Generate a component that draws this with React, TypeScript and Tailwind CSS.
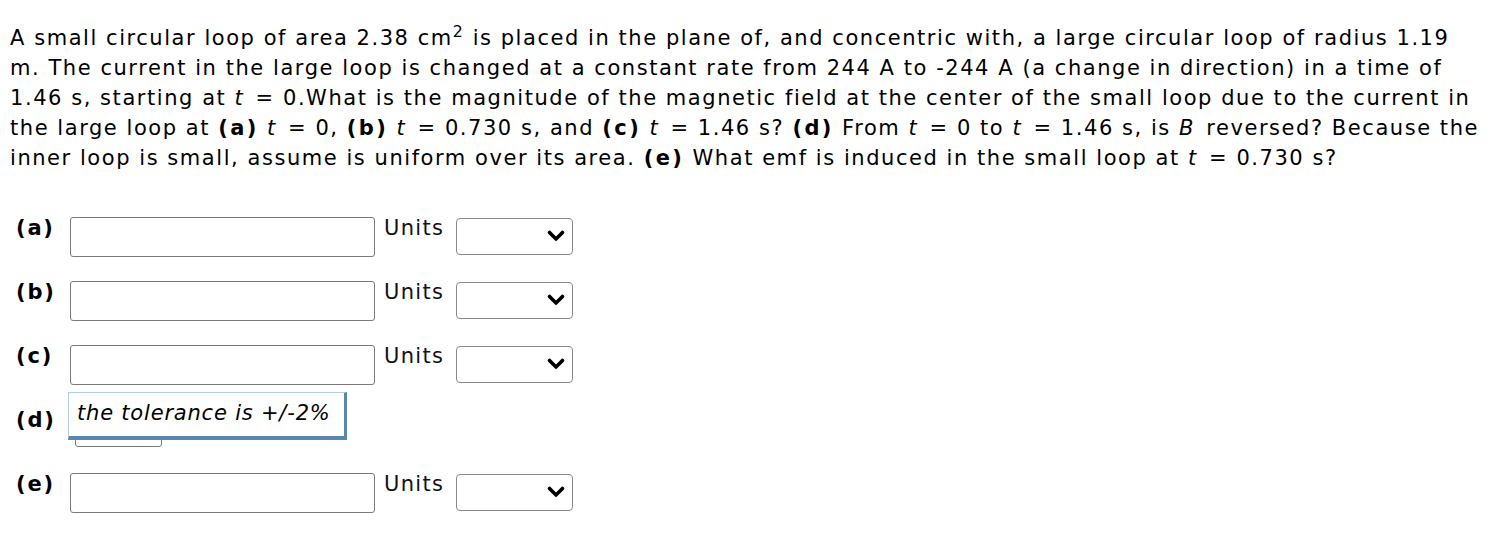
import React from 'react'

function Chevron() {
  return (
    <svg width="20" height="14" viewBox="0 0 20 14" className="absolute right-[6px] top-[10px]">
      <path d="M3.5 3.5 L10 10 L16.5 3.5" fill="none" stroke="#000" strokeWidth="3.6" strokeLinecap="round" strokeLinejoin="round" />
    </svg>
  )
}

function AnswerRow({ label }: { label: string }) {
  return (
    <div className="flex items-start h-[64px]">
      <span className="w-[60px] pl-[6px] font-bold leading-[30px] tracking-[1.8px]">{label}</span>
      <div className="mt-[4px] w-[305px] h-[40px] border border-[#7a7a7a] rounded-[3px] bg-white" />
      <span className="ml-[9px] w-[72px] leading-[30px] text-[#111] tracking-[1.3px]">Units</span>
      <div className="relative mt-[5px] w-[117px] h-[37px] border border-[#8a8a8a] rounded-[4px] bg-white">
        <Chevron />
      </div>
    </div>
  )
}

export default function App() {
  return (
    <div className="bg-white text-black text-[21px] tracking-[1.55px] pl-[10px] pt-[23px] w-[1496px] h-[552px] overflow-hidden" style={{ fontFamily: '"DejaVu Sans", Verdana, sans-serif' }}>
      <p className="leading-[30px] whitespace-nowrap [&_b]:tracking-[2.4px] [&_i]:pr-[3px]">
        A small circular loop of area 2.38 cm<sup>2</sup> is placed in the plane of, and concentric with, a large circular loop of radius 1.19
        <br />
        m. The current in the large loop is changed at a constant rate from 244 A to -244 A (a change in direction) in a time of
        <br />
        1.46 s, starting at <i>t</i> = 0.What is the magnitude of the magnetic field at the center of the small loop due to the current in
        <br />
        the large loop at <b>(a)</b> <i>t</i> = 0, <b>(b)</b> <i>t</i> = 0.730 s, and <b>(c)</b> <i>t</i> = 1.46 s? <b>(d)</b> From <i>t</i> = 0 to <i>t</i> = 1.46 s, is <i>B</i> reversed? Because the
        <br />
        inner loop is small, assume is uniform over its area. <b>(e)</b> What emf is induced in the small loop at <i>t</i> = 0.730 s?
      </p>
      <div className="mt-[40px]">
        <AnswerRow label="(a)" />
        <AnswerRow label="(b)" />
        <AnswerRow label="(c)" />
        <div className="flex items-start h-[64px]">
          <span className="w-[60px] pl-[6px] font-bold leading-[30px] tracking-[1.8px]">(d)</span>
          <div className="relative">
            <div className="ml-[5px] mt-[2px] w-[87px] h-[40px] border border-[#7a7a7a] rounded-[3px] bg-white" />
            <div className="absolute -left-[2px] -top-[13px] w-[279px] h-[48px] bg-white border border-[#b5cde3] border-r-[3px] border-b-[4px] border-r-[#5a86b2] border-b-[#5a86b2] pl-[8px] leading-[40px] italic whitespace-nowrap tracking-[0.8px]">
              the tolerance is +/-2%
            </div>
          </div>
        </div>
        <AnswerRow label="(e)" />
      </div>
    </div>
  )
}
